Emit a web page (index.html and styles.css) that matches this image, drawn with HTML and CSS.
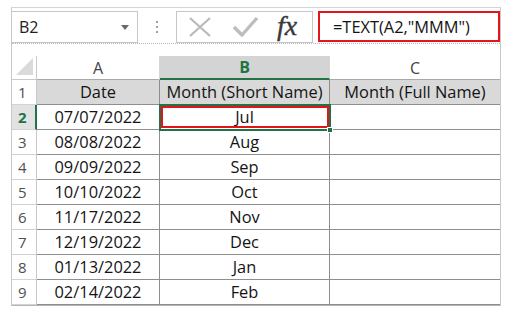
FILE: index.html
```html
<!DOCTYPE html>
<html>
<head>
<meta charset="utf-8">
<link rel="stylesheet" href="styles.css">
</head>
<body>
<div class="frame">
  <div class="toolbar">
    <div class="namebox">
      <span class="ref">B2</span>
      <span class="caret"></span>
    </div>
    <div class="dots"><i></i><i></i><i></i></div>
    <div class="fxbox">
      <svg class="icon" width="24" height="22" viewBox="0 0 24 22"><path d="M2 2 L22 20 M22 2 L2 20" stroke="#b9b9b9" stroke-width="2.2" fill="none"/></svg>
      <svg class="icon" width="28" height="22" viewBox="0 0 28 22"><path d="M3 11 L11 19 L26 2" stroke="#bdbdbd" stroke-width="3.4" fill="none" stroke-linejoin="round"/></svg>
      <span class="fx">fx</span>
    </div>
    <div class="formula">=TEXT(A2,"MMM")</div>
  </div>
  <div class="sheet">
    <div class="spacer"></div>
    <div class="row hdr">
      <div class="rh corner"><span class="tri"></span></div>
      <div class="ch">A</div>
      <div class="ch sel">B</div>
      <div class="ch c">C</div>
    </div>
    <div class="row">
      <div class="rh">1</div>
      <div class="cell head">Date</div>
      <div class="cell head">Month (Short Name)</div>
      <div class="cell head">Month (Full Name)</div>
    </div>
    <div class="row">
      <div class="rh active">2</div>
      <div class="cell">07/07/2022</div>
      <div class="cell current">Jul<span class="handle"></span></div>
      <div class="cell"></div>
    </div>
    <div class="row">
      <div class="rh">3</div>
      <div class="cell">08/08/2022</div>
      <div class="cell">Aug</div>
      <div class="cell"></div>
    </div>
    <div class="row">
      <div class="rh">4</div>
      <div class="cell">09/09/2022</div>
      <div class="cell">Sep</div>
      <div class="cell"></div>
    </div>
    <div class="row">
      <div class="rh">5</div>
      <div class="cell">10/10/2022</div>
      <div class="cell">Oct</div>
      <div class="cell"></div>
    </div>
    <div class="row">
      <div class="rh">6</div>
      <div class="cell">11/17/2022</div>
      <div class="cell">Nov</div>
      <div class="cell"></div>
    </div>
    <div class="row">
      <div class="rh">7</div>
      <div class="cell">12/19/2022</div>
      <div class="cell">Dec</div>
      <div class="cell"></div>
    </div>
    <div class="row">
      <div class="rh">8</div>
      <div class="cell">01/13/2022</div>
      <div class="cell">Jan</div>
      <div class="cell"></div>
    </div>
    <div class="row">
      <div class="rh">9</div>
      <div class="cell">02/14/2022</div>
      <div class="cell">Feb</div>
      <div class="cell"></div>
    </div>
  </div>
</div>
</body>
</html>
```
FILE: styles.css
```css
* { box-sizing: border-box; }
html, body { margin: 0; padding: 0; background: #fff; }
body {
  font-family: "Open Sans", "Noto Sans", sans-serif;
  font-size: 16.4px;
  color: #141414;
}
.frame {
  margin: 7px 0 0 11px;
  width: 490px;
  border-top: 1px solid #d4d4d4;
  border-left: 1px solid #c9c9c9;
  border-right: 1px solid #c9c9c9;
  border-bottom: 1px solid #b5b5b5;
}
.toolbar {
  height: 35px;
  display: flex;
  align-items: flex-start;
  padding-top: 3px;
}
.namebox {
  width: 126px;
  height: 32px;
  border: 1px solid #c6c6c6;
  border-left: none;
  display: flex;
  align-items: center;
  justify-content: space-between;
  padding: 0 8px 0 7px;
}
.ref { font-size: 16px; color: #222; }
.caret {
  width: 0; height: 0;
  border-left: 4px solid transparent;
  border-right: 4px solid transparent;
  border-top: 5px solid #6a6a6a;
}
.dots {
  width: 38px;
  height: 32px;
  display: flex;
  flex-direction: column;
  align-items: center;
  justify-content: center;
  gap: 3px;
}
.dots i { display: block; width: 2px; height: 2px; background: #a0a0a0; }
.fxbox {
  width: 137px;
  height: 32px;
  border: 1px solid #c6c6c6;
  display: flex;
  align-items: center;
  padding-left: 11px;
}
.fxbox .icon { display: block; }
.fxbox .icon + .icon { margin-left: 19px; }
.fx {
  font-family: "Liberation Serif", "DejaVu Serif", serif;
  font-style: italic;
  font-weight: 400;
  font-size: 28px;
  color: #3a3a3a;
  margin-left: 18px;
  letter-spacing: 0;
  line-height: 1;
  margin-top: -3px;
  -webkit-text-stroke: 0.4px #3a3a3a;
}
.formula {
  margin-left: 5px;
  width: 182px;
  height: 31px;
  border: 2px solid #e3141b;
  padding-left: 13px;
  display: flex;
  align-items: center;
  font-size: 16.4px;
  color: #141414;
}
.sheet { border-top: 1px dotted #b9b9b9; }
.spacer { height: 12px; }
.row {
  display: grid;
  grid-template-columns: 25px 123px 170px 170px;
  height: 25px;
}
.row.hdr { height: 24px; }
.rh, .ch, .cell {
  display: flex;
  align-items: center;
  line-height: 1;
}
.rh {
  border-right: 1px solid #c9c9c9;
  border-bottom: 1px solid #d3d3d3;
  padding-left: 6px;
  color: #4f4f4f;
  font-size: 15px;
}
.rh.corner { position: relative; border-bottom: 1px solid #c9c9c9; }
.tri {
  position: absolute;
  right: 3px;
  bottom: 4px;
  width: 0; height: 0;
  border-left: 17px solid transparent;
  border-bottom: 17px solid #dadada;
}
.rh.active {
  background: #e2e2e2;
  color: #217346;
  font-weight: 700;
  border-right: 2px solid #217346;
}
.ch {
  justify-content: center;
  color: #444;
  border-right: 1px solid #d6d6d6;
  border-bottom: 1px solid #a9a9a9;
  font-size: 16px;
}
.ch.sel {
  background: #d4d4d4;
  color: #217346;
  font-weight: 700;
  border-bottom: 2px solid #217346;
}
.ch.c { border-right: none; }
.cell {
  justify-content: center;
  border-right: 1px solid #8e8e8e;
  border-bottom: 1px solid #8e8e8e;
  color: #141414;
}
.cell:last-child { border-right: none; }
.cell.head { background: #d9d9d9; }
.cell.current { position: relative; }
.cell.current::before {
  content: "";
  position: absolute;
  left: -1px; top: -1px; right: -2px; bottom: -2px;
  border: 2px solid #217346;
}
.cell.current::after {
  content: "";
  position: absolute;
  left: 1px; top: 1px; right: 0; bottom: 1px;
  border: 2px solid #e3141b;
}
.handle {
  position: absolute;
  right: -4px;
  bottom: -4px;
  width: 6px;
  height: 6px;
  background: #217346;
  border: 1px solid #fff;
  z-index: 2;
}
```
